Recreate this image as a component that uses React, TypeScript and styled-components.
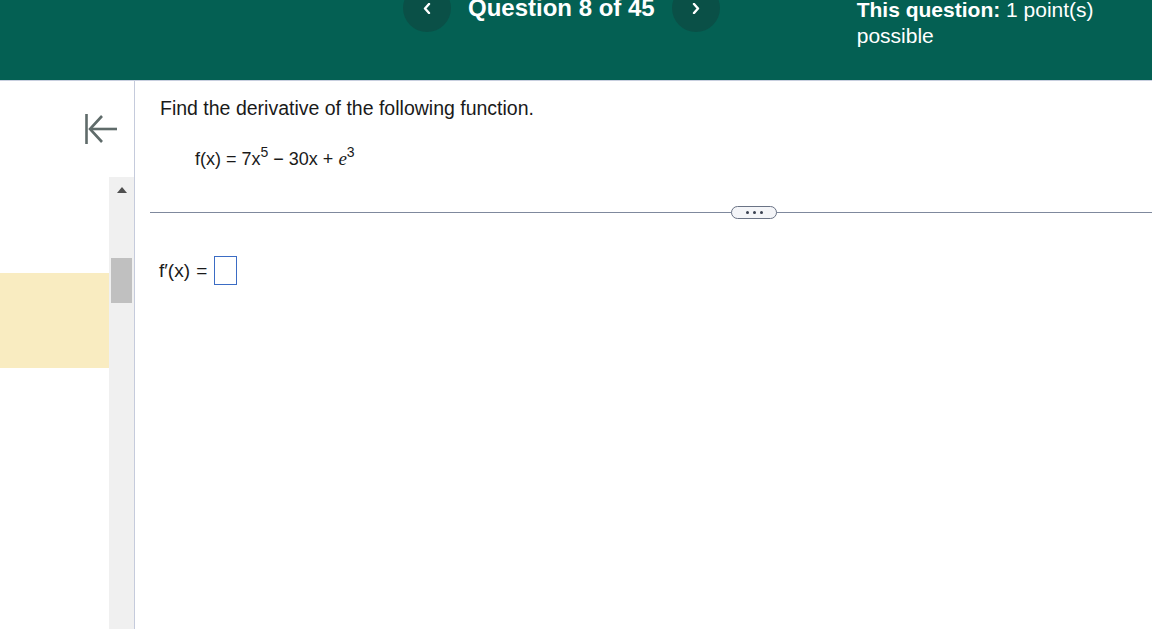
import React from 'react';
import styled, { createGlobalStyle } from 'styled-components';

const GlobalStyle = createGlobalStyle`
  html, body {
    margin: 0;
    padding: 0;
    height: 100%;
    overflow: hidden;
    background: #ffffff;
  }
  body {
    font-family: "Liberation Sans", Arial, sans-serif;
    color: #1a1a1a;
  }
  #root {
    height: 100%;
  }
`;

const Page = styled.div`
  display: flex;
  flex-direction: column;
  height: 100%;
`;

const Header = styled.header`
  flex: none;
  height: 80px;
  background: #046053;
  border-bottom: 1px solid #c8cfdf;
  display: flex;
  align-items: flex-start;
  padding-left: 403px;
  overflow: hidden;
  color: #ffffff;
`;

const NavGroup = styled.div`
  display: flex;
  align-items: flex-start;
  gap: 17px;
`;

const NavButton = styled.button`
  width: 48px;
  height: 48px;
  margin-top: -16px;
  border: none;
  border-radius: 50%;
  background: #0a5047;
  display: flex;
  align-items: flex-end;
  justify-content: center;
  padding: 0 0 18px;
  cursor: pointer;
`;

const QuestionTitle = styled.h1`
  margin: -6px 0 0;
  font-size: 24px;
  line-height: 28px;
  font-weight: 700;
  white-space: nowrap;
`;

const PointsInfo = styled.div`
  margin: -3px 0 0 137px;
  width: 260px;
  font-size: 21px;
  line-height: 26px;

  b {
    font-weight: 700;
  }
`;

const Body = styled.div`
  flex: 1;
  display: flex;
  min-height: 0;
`;

const Sidebar = styled.aside`
  flex: none;
  width: 134px;
  border-right: 1px solid #c5cbdc;
  display: flex;
  flex-direction: column;
`;

const CollapseRow = styled.div`
  height: 96px;
  display: flex;
  justify-content: flex-end;
  align-items: flex-start;
  padding: 32px 16px 0 0;
  box-sizing: border-box;
`;

const ListArea = styled.div`
  flex: 1;
  display: flex;
  min-height: 0;
`;

const QuestionList = styled.div`
  width: 109px;
  display: flex;
  flex-direction: column;
`;

const ListItem = styled.div<{ $active?: boolean; $h: number }>`
  height: ${(p) => p.$h}px;
  background: ${(p) => (p.$active ? '#f9ecc1' : 'transparent')};
`;

const ScrollTrack = styled.div`
  width: 25px;
  background: #f0f0f0;
  display: flex;
  flex-direction: column;
  align-items: center;
`;

const ScrollArrow = styled.div`
  margin-top: 10px;
  width: 0;
  height: 0;
  border-left: 5.5px solid transparent;
  border-right: 5.5px solid transparent;
  border-bottom: 6px solid #505050;
`;

const ScrollThumb = styled.div`
  margin-top: 65px;
  width: 21px;
  height: 45px;
  background: #c0c0c0;
`;

const Main = styled.main`
  flex: 1;
  padding: 15px 0 0 15px;
`;

const Prompt = styled.p`
  margin: 0;
  padding-left: 10px;
  font-size: 19.5px;
  line-height: 24px;
  color: #1a1a1a;
`;

const Formula = styled.div`
  margin-top: 28px;
  padding-left: 45px;
  font-size: 18px;
  line-height: 22px;
  color: #1a1a1a;
  white-space: nowrap;

  sup {
    font-size: 14px;
    line-height: 0;
    vertical-align: 8px;
  }
`;

const MathE = styled.span`
  font-family: "Liberation Serif", "Times New Roman", serif;
  font-style: italic;
  font-size: 19px;
`;

const Divider = styled.div`
  margin-top: 42px;
  height: 1px;
  background: #7f899d;
  display: flex;
  align-items: center;
`;

const MorePill = styled.div`
  width: 44px;
  height: 11px;
  margin-left: 581px;
  border: 1px solid #6a7385;
  border-radius: 7px;
  background: #f4f5f8;
  display: flex;
  align-items: center;
  justify-content: center;
  gap: 4px;
`;

const Dot = styled.span`
  width: 3px;
  height: 3px;
  border-radius: 50%;
  background: #3a4150;
`;

const AnswerRow = styled.div`
  margin-top: 43px;
  padding-left: 9px;
  display: flex;
  align-items: center;
  gap: 7px;
  font-size: 19px;
  line-height: 22px;
  word-spacing: 1px;
`;

const AnswerBox = styled.input`
  width: 23px;
  height: 29px;
  box-sizing: border-box;
  border: 1.5px solid #3b6cc4;
  padding: 0;
  background: #ffffff;
  outline: none;
`;

const Chevron = ({ dir }: { dir: 'left' | 'right' }) => (
  <svg width="8" height="11" viewBox="0 0 8 11" fill="none">
    <path
      d={dir === 'left' ? 'M6 1 L2 5.5 L6 10' : 'M2 1 L6 5.5 L2 10'}
      stroke="#ffffff"
      strokeWidth="2.4"
      strokeLinecap="round"
      strokeLinejoin="round"
    />
  </svg>
);

const CollapseIcon = () => (
  <svg width="34" height="32" viewBox="0 0 34 32" fill="none" stroke="#5f6b6a" strokeWidth="2.6">
    <path d="M2.5 1 V31" />
    <path d="M6 16 H33" />
    <path d="M18 3 L6 16 L18 29" strokeLinejoin="miter" />
  </svg>
);

export default function App() {
  return (
    <Page>
      <GlobalStyle />
      <Header>
        <NavGroup>
          <NavButton aria-label="Previous question">
            <Chevron dir="left" />
          </NavButton>
          <QuestionTitle>Question 8 of 45</QuestionTitle>
          <NavButton aria-label="Next question">
            <Chevron dir="right" />
          </NavButton>
        </NavGroup>
        <PointsInfo>
          <b>This question:</b> 1 point(s) possible
        </PointsInfo>
      </Header>
      <Body>
        <Sidebar>
          <CollapseRow>
            <CollapseIcon />
          </CollapseRow>
          <ListArea>
            <QuestionList>
              <ListItem $h={96} />
              <ListItem $h={95} $active />
            </QuestionList>
            <ScrollTrack>
              <ScrollArrow />
              <ScrollThumb />
            </ScrollTrack>
          </ListArea>
        </Sidebar>
        <Main>
          <Prompt>Find the derivative of the following function.</Prompt>
          <Formula>
            f(x) = 7x<sup>5</sup> − 30x + <MathE>e</MathE>
            <sup>3</sup>
          </Formula>
          <Divider>
            <MorePill>
              <Dot />
              <Dot />
              <Dot />
            </MorePill>
          </Divider>
          <AnswerRow>
            <span>f′(x) =</span>
            <AnswerBox aria-label="answer" />
          </AnswerRow>
        </Main>
      </Body>
    </Page>
  );
}
